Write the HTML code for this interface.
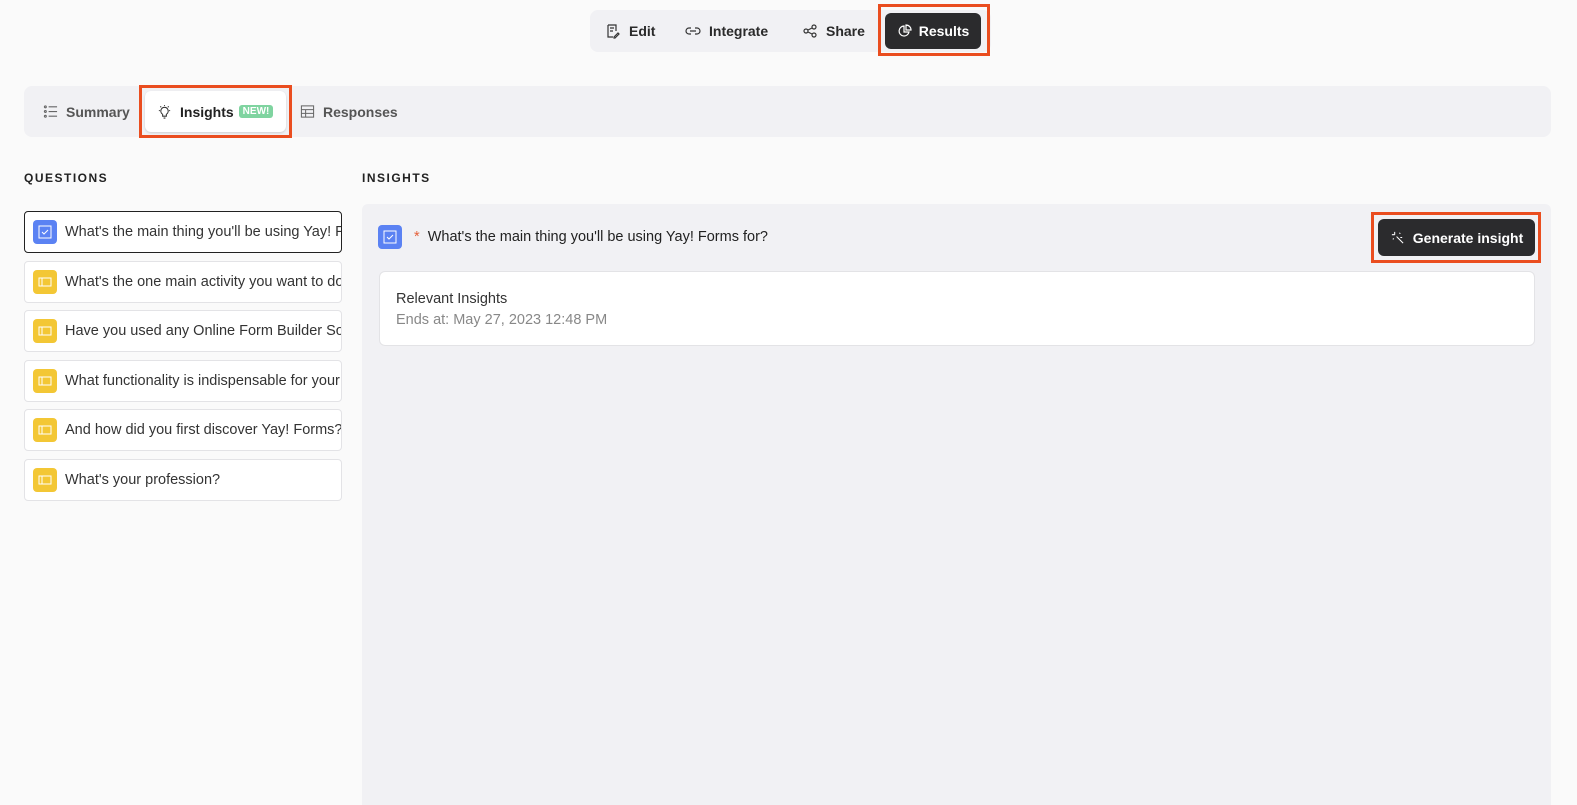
<!DOCTYPE html>
<html><head><style>
*{box-sizing:border-box;margin:0;padding:0}
body{width:1577px;height:805px;background:#fafafa;font-family:"Liberation Sans",sans-serif;position:relative;overflow:hidden;color:#222}
.abs{position:absolute}
.topnav{left:590px;top:10px;width:401px;height:42px;background:#f1f1f4;border-radius:8px}
.ti{position:absolute;top:0;height:42px;display:flex;align-items:center;font-weight:bold;font-size:14px;color:#2a2a2a}
.ti svg{margin-right:8px}
.results{left:885px;top:13px;width:96px;height:36px;background:#2b2b2d;border-radius:6px;color:#fff;font-weight:bold;font-size:14px;display:flex;align-items:center;justify-content:center}
.redbox{border:3px solid #ea4d1f}
.tabs{left:24px;top:86px;width:1527px;height:51px;background:#f1f1f4;border-radius:8px}
.tab{position:absolute;display:flex;align-items:center;font-size:14px;font-weight:bold;color:#555;height:51px;top:0}
.tab svg{margin-right:8px}
.sel{left:145px;top:91px;width:141px;height:41px;background:#fff;border-radius:6px;box-shadow:0 1px 2px rgba(0,0,0,.15)}
.h{font-size:12px;font-weight:bold;letter-spacing:1.5px;color:#222}
.q{left:24px;width:318px;height:42px;background:#fff;border:1px solid #e3e3e6;border-radius:4px;display:flex;align-items:center;padding-left:8px;font-size:14.5px;color:#333;white-space:nowrap;overflow:hidden}
.q.a{border-color:#222}
.ic{width:24px;height:24px;border-radius:4px;margin-right:8px;flex:none;display:flex;align-items:center;justify-content:center}
.blue{background:#5b82f3}.yel{background:#f3c735}
.panel{left:362px;top:204px;width:1189px;height:601px;background:#f1f1f4;border-radius:6px 6px 0 0}
.card{left:379px;top:271px;width:1156px;height:75px;background:#fff;border:1px solid #e3e3e6;border-radius:6px;padding:19px 16px;font-size:14.5px}
</style></head><body>
<div class="abs topnav">
 <div class="ti" style="left:15px"><svg width="16" height="16" viewBox="0 0 16 16" fill="none" stroke="#333" stroke-width="1.2"><path d="M3 2h8v6M3 2v12h5M5 5h4M5 8h3M9 14l4-4 1 1-4 4H9z"/></svg>Edit</div>
 <div class="ti" style="left:95px"><svg width="16" height="16" viewBox="0 0 16 16" fill="none" stroke="#333" stroke-width="1.2"><path d="M6 5H4a3 3 0 000 6h2M10 5h2a3 3 0 010 6h-2M5 8h6"/></svg>Integrate</div>
 <div class="ti" style="left:212px"><svg width="16" height="16" viewBox="0 0 16 16" fill="none" stroke="#333" stroke-width="1.2"><circle cx="4" cy="8" r="2"/><circle cx="12" cy="4" r="2"/><circle cx="12" cy="12" r="2"/><path d="M6 7l4-2M6 9l4 2"/></svg>Share</div>
</div>
<div class="abs redbox" style="left:878px;top:4px;width:112px;height:52px"></div>
<div class="abs results"><svg width="16" height="16" viewBox="0 0 16 16" fill="none" stroke="#fff" stroke-width="1.2" style="margin-right:6px"><path d="M7 3a5 5 0 105 6H7zM9 2v5h5a5 5 0 00-5-5z"/></svg>Results</div>

<div class="abs tabs"></div>
<div class="abs sel"></div>
<div class="abs redbox" style="left:139px;top:85px;width:153px;height:53px"></div>
<div class="abs tab" style="left:43px;top:86px"><svg width="15" height="15" viewBox="0 0 16 16" fill="none" stroke="#666" stroke-width="1.2"><path d="M6 3h9M6 8h9M6 13h9"/><circle cx="2.5" cy="3" r="1"/><circle cx="2.5" cy="8" r="1"/><circle cx="2.5" cy="13" r="1"/></svg>Summary</div>
<div class="abs tab" style="left:157px;top:86px;color:#222"><svg width="15" height="15" viewBox="0 0 16 16" fill="none" stroke="#333" stroke-width="1.1"><path d="M6 11a4 4 0 114 0v2H6zM7 15h2M8 1v1M2 7h1M13 7h1M3.5 2.5l1 1M12.5 2.5l-1 1"/></svg>Insights<span style="margin-left:5px;background:#7fd4a0;color:#fff;font-size:10px;padding:1px 4px;border-radius:3px">NEW!</span></div>
<div class="abs tab" style="left:300px;top:86px"><svg width="15" height="15" viewBox="0 0 16 16" fill="none" stroke="#666" stroke-width="1.1"><rect x="1.5" y="2" width="13" height="12"/><path d="M1.5 6h13M1.5 10h13M6 6v8"/></svg>Responses</div>

<div class="abs h" style="left:24px;top:171px">QUESTIONS</div>
<div class="abs h" style="left:362px;top:171px">INSIGHTS</div>

<div class="abs q a" style="top:211px"><div class="ic blue"><svg width="14" height="14" viewBox="0 0 14 14" fill="none" stroke="#fff" stroke-width="1"><rect x="1" y="1" width="12" height="12"/><path d="M4 7l2 2 4-4"/></svg></div>What's the main thing you'll be using Yay! Forms for?</div>
<div class="abs q" style="top:261px"><div class="ic yel"><svg width="14" height="10" viewBox="0 0 14 10" fill="none" stroke="#fff"><rect x="1" y="1" width="12" height="8"/><path d="M4 1v8"/></svg></div>What's the one main activity you want to do</div>
<div class="abs q" style="top:310px"><div class="ic yel"><svg width="14" height="10" viewBox="0 0 14 10" fill="none" stroke="#fff"><rect x="1" y="1" width="12" height="8"/><path d="M4 1v8"/></svg></div>Have you used any Online Form Builder Software</div>
<div class="abs q" style="top:360px"><div class="ic yel"><svg width="14" height="10" viewBox="0 0 14 10" fill="none" stroke="#fff"><rect x="1" y="1" width="12" height="8"/><path d="M4 1v8"/></svg></div>What functionality is indispensable for your</div>
<div class="abs q" style="top:409px"><div class="ic yel"><svg width="14" height="10" viewBox="0 0 14 10" fill="none" stroke="#fff"><rect x="1" y="1" width="12" height="8"/><path d="M4 1v8"/></svg></div>And how did you first discover Yay! Forms?</div>
<div class="abs q" style="top:459px"><div class="ic yel"><svg width="14" height="10" viewBox="0 0 14 10" fill="none" stroke="#fff"><rect x="1" y="1" width="12" height="8"/><path d="M4 1v8"/></svg></div>What's your profession?</div>

<div class="abs panel"></div>
<div class="abs ic blue" style="left:378px;top:225px"><svg width="14" height="14" viewBox="0 0 14 14" fill="none" stroke="#fff" stroke-width="1"><rect x="1" y="1" width="12" height="12"/><path d="M4 7l2 2 4-4"/></svg></div>
<div class="abs" style="left:414px;top:229px;font-size:14.5px"><span style="color:#e5603a">*</span>&nbsp; What's the main thing you'll be using Yay! Forms for?</div>
<div class="abs redbox" style="left:1371px;top:212px;width:170px;height:51px"></div>
<div class="abs" style="left:1378px;top:219px;width:157px;height:37px;background:#2b2b2d;border-radius:6px;color:#fff;font-weight:bold;font-size:14px;display:flex;align-items:center;justify-content:center"><svg width="15" height="15" viewBox="0 0 16 16" fill="none" stroke="#fff" stroke-width="1.1" style="margin-right:8px"><path d="M7 7l7 7M5 2v3M2 5h3M10 3l1 1M3 10l1-1M11 8h2"/></svg>Generate insight</div>
<div class="abs card"><div style="color:#333">Relevant Insights</div><div style="color:#888;margin-top:5px">Ends at: May 27, 2023 12:48 PM</div></div>
</body></html>
